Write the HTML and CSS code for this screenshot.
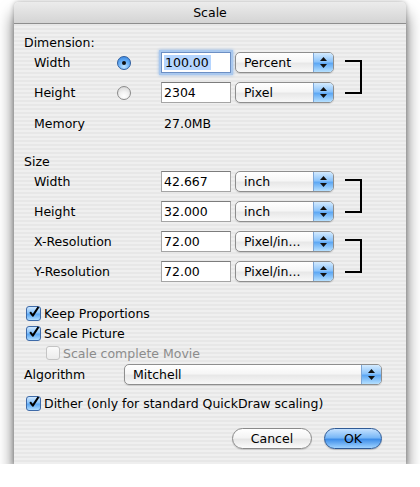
FILE: index.html
```html
<!DOCTYPE html>
<html>
<head>
<meta charset="utf-8">
<link rel="stylesheet" href="styles.css">
</head>
<body>
<div class="window">
  <div class="titlebar">Scale</div>
  <div class="content">
    <div class="section-label">Dimension:</div>
    <div class="group">
      <div class="rows">
        <div class="row">
          <span class="label lbl-radio">Width</span>
          <span class="radio-cell"><span class="radio on"><span class="dot"></span></span></span>
          <span class="field focused"><span class="sel">100.00</span></span>
          <span class="popup"><span class="ptext">Percent</span><span class="arrows"><svg width="7" height="11" viewBox="0 0 7 11"><path d="M3.5 0 L7 4 L0 4 Z M0 7 L7 7 L3.5 11 Z" fill="#111"/></svg></span></span>
        </div>
        <div class="row">
          <span class="label lbl-radio">Height</span>
          <span class="radio-cell"><span class="radio"></span></span>
          <span class="field">2304</span>
          <span class="popup"><span class="ptext">Pixel</span><span class="arrows"><svg width="7" height="11" viewBox="0 0 7 11"><path d="M3.5 0 L7 4 L0 4 Z M0 7 L7 7 L3.5 11 Z" fill="#111"/></svg></span></span>
        </div>
      </div>
      <div class="bracket"></div>
    </div>
    <div class="row memory">
      <span class="label lbl-wide">Memory</span>
      <span class="value">27.0MB</span>
    </div>
    <div class="section-label size-label">Size</div>
    <div class="group">
      <div class="rows">
        <div class="row">
          <span class="label lbl-wide">Width</span>
          <span class="field">42.667</span>
          <span class="popup"><span class="ptext">inch</span><span class="arrows"><svg width="7" height="11" viewBox="0 0 7 11"><path d="M3.5 0 L7 4 L0 4 Z M0 7 L7 7 L3.5 11 Z" fill="#111"/></svg></span></span>
        </div>
        <div class="row">
          <span class="label lbl-wide">Height</span>
          <span class="field">32.000</span>
          <span class="popup"><span class="ptext">inch</span><span class="arrows"><svg width="7" height="11" viewBox="0 0 7 11"><path d="M3.5 0 L7 4 L0 4 Z M0 7 L7 7 L3.5 11 Z" fill="#111"/></svg></span></span>
        </div>
      </div>
      <div class="bracket"></div>
    </div>
    <div class="group group-gap">
      <div class="rows">
        <div class="row">
          <span class="label lbl-wide">X-Resolution</span>
          <span class="field">72.00</span>
          <span class="popup"><span class="ptext">Pixel/in...</span><span class="arrows"><svg width="7" height="11" viewBox="0 0 7 11"><path d="M3.5 0 L7 4 L0 4 Z M0 7 L7 7 L3.5 11 Z" fill="#111"/></svg></span></span>
        </div>
        <div class="row">
          <span class="label lbl-wide">Y-Resolution</span>
          <span class="field">72.00</span>
          <span class="popup"><span class="ptext">Pixel/in...</span><span class="arrows"><svg width="7" height="11" viewBox="0 0 7 11"><path d="M3.5 0 L7 4 L0 4 Z M0 7 L7 7 L3.5 11 Z" fill="#111"/></svg></span></span>
        </div>
      </div>
      <div class="bracket"></div>
    </div>

    <div class="checks">
      <div class="check-row"><span class="cbox checked"><svg width="14" height="14" viewBox="0 0 14 14"><path d="M2.5 7.2 L5.6 11.2 L12.2 1.2" fill="none" stroke="#000" stroke-width="2.4" stroke-linejoin="round"/></svg></span><span>Keep Proportions</span></div>
      <div class="check-row"><span class="cbox checked"><svg width="14" height="14" viewBox="0 0 14 14"><path d="M2.5 7.2 L5.6 11.2 L12.2 1.2" fill="none" stroke="#000" stroke-width="2.4" stroke-linejoin="round"/></svg></span><span>Scale Picture</span></div>
      <div class="check-row sub disabled"><span class="cbox off"></span><span>Scale complete Movie</span></div>
    </div>
    <div class="algo-row">
      <span class="algo-label">Algorithm</span>
      <span class="popup wide"><span class="ptext">Mitchell</span><span class="arrows"><svg width="7" height="11" viewBox="0 0 7 11"><path d="M3.5 0 L7 4 L0 4 Z M0 7 L7 7 L3.5 11 Z" fill="#111"/></svg></span></span>
    </div>
    <div class="check-row dither"><span class="cbox checked"><svg width="14" height="14" viewBox="0 0 14 14"><path d="M2.5 7.2 L5.6 11.2 L12.2 1.2" fill="none" stroke="#000" stroke-width="2.4" stroke-linejoin="round"/></svg></span><span>Dither (only for standard QuickDraw scaling)</span></div>
    <div class="buttons">
      <span class="btn cancel">Cancel</span>
      <span class="btn ok">OK</span>
    </div>
  </div>
</div>
</body>
</html>
```

FILE: styles.css
```css
html, body {
  margin: 0;
  padding: 0;
  background: #ffffff;
}
body {
  font-family: "DejaVu Sans", "Liberation Sans", sans-serif;
  font-size: 12.5px;
  color: #000;
}
.window {
  margin: 2px 0 0 14px;
  width: 392px;
  height: 462px;
  border-radius: 5px 5px 0 0;
  background: repeating-linear-gradient(to bottom, #efefef 0px, #efefef 2px, #e7e7e7 2px, #e7e7e7 4px);
  box-shadow: 0 12px 16px rgba(0,0,0,0.6), 0 0 5px rgba(0,0,0,0.3);
  overflow: hidden;
}
.titlebar {
  height: 21px;
  border-bottom: 1px solid #8e8e8e;
  background: linear-gradient(to bottom, #ececec, #d4d4d4);
  text-align: center;
  line-height: 21px;
  font-size: 12.5px;
}
.content {
  padding: 11px 0 0 0;
  display: flex;
  flex-direction: column;
}
.section-label {
  height: 16px;
  line-height: 16px;
  padding-left: 10px;
  margin-bottom: 1px;
}
.size-label {
  margin-top: 20px;
}
.group {
  display: flex;
  align-items: flex-start;
}
.group-gap {
  margin-top: 9px;
}
.rows {
  display: flex;
  flex-direction: column;
  gap: 9px;
}
.row {
  display: flex;
  align-items: center;
  height: 21px;
}
.label {
  padding-left: 20px;
  box-sizing: border-box;
}
.lbl-radio { width: 103px; }
.lbl-wide { width: 147px; }
.radio-cell {
  width: 44px;
  display: flex;
  align-items: center;
}
.radio {
  width: 14px;
  height: 14px;
  border-radius: 50%;
  box-sizing: border-box;
  border: 1px solid #8a8a8a;
  background: radial-gradient(circle at 50% 75%, #ffffff 0%, #f2f2f2 40%, #cfcfcf 100%);
  display: flex;
  align-items: center;
  justify-content: center;
}
.radio.on {
  border-color: #2d5d9e;
  background: radial-gradient(circle at 50% 80%, #bfe3ff 0%, #6fb3f7 45%, #2f7fdc 100%);
}
.dot {
  width: 4px;
  height: 4px;
  border-radius: 50%;
  background: #111;
}
.field {
  width: 70px;
  height: 21px;
  box-sizing: border-box;
  background: #fff;
  border: 1px solid #a5a5a5;
  border-top-color: #7c7c7c;
  padding: 0 0 0 2px;
  line-height: 19px;
}
.field.focused {
  border: 1px solid #6c8fc4;
  box-shadow: 0 0 0 2px #a9c8ee, 0 0 3px 2px #8eb6e8;
}
.sel {
  background: #b5d5ff;
  padding: 0 2px 0 1px;
}
.popup {
  margin-left: 4px;
  width: 99px;
  height: 21px;
  box-sizing: border-box;
  border: 1px solid #8e8e8e;
  border-radius: 5px;
  background: linear-gradient(to bottom, #ffffff 0%, #f6f6f6 45%, #e8e8e8 55%, #f8f8f8 100%);
  display: flex;
  align-items: stretch;
  overflow: hidden;
  box-shadow: 0 1px 1px rgba(0,0,0,0.12);
}
.ptext {
  flex: 1;
  padding-left: 8px;
  line-height: 19px;
  white-space: nowrap;
  overflow: hidden;
}
.arrows {
  width: 19px;
  border-left: 1px solid #7ea6d6;
  background: linear-gradient(to bottom, #d4ebff 0%, #8cc4fb 45%, #5ea8f4 55%, #b6e0ff 100%);
  display: flex;
  align-items: center;
  justify-content: center;
}
.bracket {
  width: 17px;
  height: 34px;
  margin: 8px 0 0 11px;
  box-sizing: border-box;
  border: 2px solid #000;
  border-left: none;
}
.memory {
  margin-top: 10px;
}
.value {
  padding-left: 3px;
}
.checks {
  margin-top: 21px;
  display: flex;
  flex-direction: column;
}
.check-row {
  display: flex;
  align-items: center;
  height: 20px;
  padding-left: 12px;
  gap: 3px;
}
.check-row.sub {
  padding-left: 32px;
}
.check-row.disabled {
  color: #8c8c8c;
}
.cbox {
  width: 15px;
  height: 15px;
  box-sizing: border-box;
  border-radius: 3px;
  border: 1px solid #3e6aa8;
  background: linear-gradient(to bottom, #cfe8ff 0%, #86c1fa 45%, #5aa6f3 55%, #aedcff 100%);
  display: flex;
  align-items: center;
  justify-content: center;
}
.cbox svg {
  margin-top: -2px;
  margin-left: 1px;
}
.cbox.off {
  width: 14px;
  height: 14px;
  border: 1px solid #c4c4c4;
  background: linear-gradient(to bottom, #fafafa, #ececec);
}
.algo-row {
  display: flex;
  align-items: center;
  height: 21px;
  margin-top: 1px;
}
.algo-label {
  width: 110px;
  box-sizing: border-box;
  padding-left: 10px;
}
.popup.wide {
  margin-left: 0;
  width: 258px;
}
.dither {
  margin-top: 8px;
}
.buttons {
  margin-top: 15px;
  display: flex;
  padding-left: 218px;
  gap: 12px;
}
.btn {
  height: 21px;
  box-sizing: border-box;
  border-radius: 11px;
  display: flex;
  align-items: center;
  justify-content: center;
}
.cancel {
  width: 80px;
  border: 1px solid #8a8a8a;
  background: linear-gradient(to bottom, #ffffff 0%, #f4f4f4 45%, #e6e6e6 55%, #fbfbfb 100%);
  box-shadow: 0 1px 1px rgba(0,0,0,0.15);
}
.ok {
  width: 58px;
  border: 1px solid #2f5a95;
  background: linear-gradient(to bottom, #c4e1ff 0%, #7ab8f7 45%, #3f8ee9 55%, #9fd3ff 100%);
  box-shadow: 0 1px 1px rgba(0,0,0,0.2);
}
```
